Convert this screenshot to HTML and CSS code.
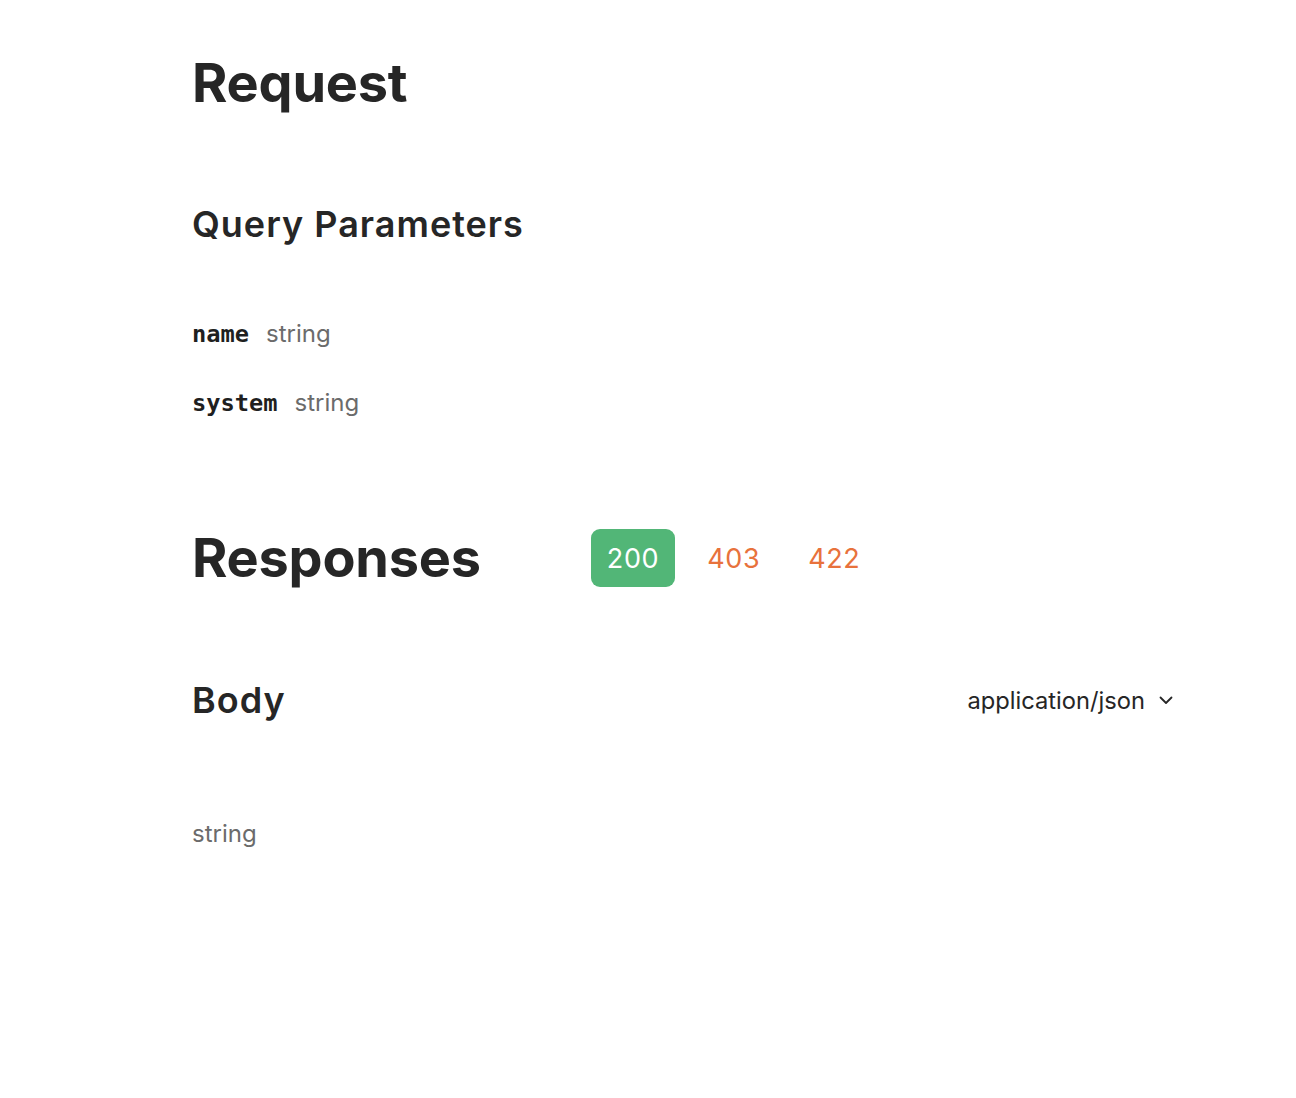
FILE: index.html
```html
<!DOCTYPE html>
<html lang="en">
<head>
    <meta charset="UTF-8">
    <meta name="viewport" content="width=device-width, initial-scale=1.0">
    <title>Endpoint</title>
    <link rel="stylesheet" href="styles.css">
</head>
<body>
    <main class="page">
        <section class="request">
            <h1 class="title">Request</h1>
            <h2 class="subtitle">Query Parameters</h2>
            <ul class="params">
                <li class="param"><code class="param-name">name</code><span class="type">string</span></li>
                <li class="param"><code class="param-name">system</code><span class="type">string</span></li>
            </ul>
        </section>

        <section class="responses">
            <div class="responses-head">
                <h1 class="title">Responses</h1>
                <div class="codes">
                    <button class="code active">200</button>
                    <button class="code error">403</button>
                    <button class="code error">422</button>
                </div>
            </div>
            <div class="body-head">
                <h2 class="subtitle">Body</h2>
                <button class="media-type">
                    application/json
                    <svg width="16" height="16" viewBox="0 0 16 16" fill="none" stroke="currentColor" stroke-width="1.8" stroke-linecap="round" stroke-linejoin="round"><path d="M2.5 5.5l5.5 5.5 5.5-5.5"/></svg>
                </button>
            </div>
            <div class="body-type">string</div>
        </section>
    </main>
</body>
</html>
```

FILE: styles.css
```css
body {
    margin: 0;
    background-color: #fff;
    color: #262626;
    font-family: Inter, "Noto Sans", sans-serif;
}

.page {
    width: 982px;
    padding: 48px 0 0 192px;
}

.title {
    margin: 0;
    font-size: 54px;
    font-weight: 700;
    letter-spacing: -0.2px;
    line-height: 70px;
}

.subtitle {
    margin: 0;
    font-size: 36px;
    font-weight: 600;
    letter-spacing: 1px;
    line-height: 44px;
}

.request .subtitle {
    margin-top: 84px;
}

.params {
    list-style: none;
    margin: 73px 0 0;
    padding: 0;
}

.param {
    display: flex;
    align-items: baseline;
    gap: 17px;
    height: 69px;
    line-height: 30px;
}

.param-name {
    font-family: "DejaVu Sans Mono", monospace;
    font-weight: 700;
    font-size: 23.7px;
    color: #1f1f1f;
}

.type {
    font-size: 24px;
    color: #6b6b6b;
}

.responses {
    margin-top: 66px;
}

.responses-head {
    display: flex;
    align-items: center;
    gap: 110px;
}

.codes {
    display: flex;
    align-items: center;
}

.code {
    height: 58px;
    padding: 0 16px;
    border: none;
    border-radius: 9px;
    background: none;
    font-family: Inter, sans-serif;
    font-size: 27px;
    font-weight: 400;
    letter-spacing: 0.6px;
    cursor: pointer;
}

.code + .code {
    margin-left: 16px;
}

.active {
    background-color: #52b677;
    color: #fff;
}

.error {
    color: #e8723c;
}

.body-head {
    display: flex;
    align-items: center;
    justify-content: space-between;
    margin-top: 85px;
}

.media-type {
    display: flex;
    align-items: center;
    gap: 13px;
    border: none;
    background: none;
    padding: 0;
    font-family: Inter, sans-serif;
    font-size: 23.7px;
    color: #262626;
    cursor: pointer;
}

.body-type {
    margin-top: 97px;
    font-size: 24px;
    color: #6b6b6b;
}
```
